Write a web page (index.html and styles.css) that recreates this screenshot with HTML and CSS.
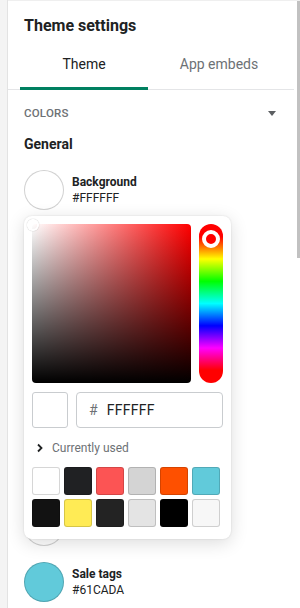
FILE: index.html
```html
<!DOCTYPE html>
<html>
<head>
<meta charset="utf-8">
<link rel="stylesheet" href="styles.css">
</head>
<body>
<div class="app">
  <div class="rail"></div>
  <div class="panel">
    <h1 class="title">Theme settings</h1>
    <div class="tabs">
      <div class="tab active">Theme</div>
      <div class="tab">App embeds</div>
    </div>
    <div class="section">
      <div class="section-head">
        <span class="section-label">Colors</span>
        <span class="caret"></span>
      </div>
      <h2 class="group">General</h2>
      <div class="items">
        <div class="item"><span class="dot" style="background:#FFFFFF"></span><div class="meta"><div class="name">Background</div><div class="val">#FFFFFF</div></div></div>
        <div class="item"><span class="dot" style="background:#202123"></span><div class="meta"><div class="name">Text</div><div class="val">#202123</div></div></div>
        <div class="item"><span class="dot" style="background:#FC5454"></span><div class="meta"><div class="name">Accent</div><div class="val">#FC5454</div></div></div>
        <div class="item"><span class="dot" style="background:#D4D4D4"></span><div class="meta"><div class="name">Border</div><div class="val">#D4D4D4</div></div></div>
        <div class="item"><span class="dot" style="background:#FE5000"></span><div class="meta"><div class="name">Buttons</div><div class="val">#FE5000</div></div></div>
        <div class="item"><span class="dot" style="background:#121212"></span><div class="meta"><div class="name">Links</div><div class="val">#121212</div></div></div>
        <div class="item"><span class="dot" style="background:#FFFFFF"></span><div class="meta"><div class="name">Footer</div><div class="val">#FFFFFF</div></div></div>
        <div class="item"><span class="dot" style="background:#61CADA"></span><div class="meta"><div class="name">Sale tags</div><div class="val">#61CADA</div></div></div>
      </div>
    </div>

    <div class="popover">
      <div class="picker">
        <div class="sv">
          <span class="sv-knob"></span>
        </div>
        <div class="hue">
          <span class="hue-knob"></span>
        </div>
      </div>
      <div class="hex-row">
        <div class="preview"></div>
        <div class="hex-input"><span class="hash">#</span><span class="hex">FFFFFF</span></div>
      </div>
      <div class="used">
        <svg class="chev" width="8" height="10" viewBox="0 0 8 10"><path d="M2 1.5 L5.5 5 L2 8.5" fill="none" stroke="#202223" stroke-width="1.8"/></svg>
        <span>Currently used</span>
      </div>
      <div class="swatches">
        <span class="sw" style="background:#FFFFFF"></span>
        <span class="sw" style="background:#202123"></span>
        <span class="sw" style="background:#FC5454"></span>
        <span class="sw" style="background:#D4D4D4"></span>
        <span class="sw" style="background:#FE5000"></span>
        <span class="sw" style="background:#61CADA"></span>
        <span class="sw" style="background:#121212"></span>
        <span class="sw" style="background:#FFEB55"></span>
        <span class="sw" style="background:#232323"></span>
        <span class="sw" style="background:#E4E4E4"></span>
        <span class="sw" style="background:#000000"></span>
        <span class="sw" style="background:#F7F7F7"></span>
      </div>
    </div>

    <div class="scrollbar"></div>
  </div>
</div>
</body>
</html>
```

FILE: styles.css
```css
* { box-sizing: border-box; }
html, body {
  margin: 0;
  padding: 0;
  width: 300px;
  height: 608px;
  overflow: hidden;
  background: #fff;
  font-family: Roboto, "Liberation Sans", sans-serif;
  color: #202223;
}
.app {
  display: flex;
  height: 608px;
}
.rail {
  width: 8px;
  flex: none;
  background: #f4f4f4;
  border-right: 1px solid #e3e3e3;
}
.panel {
  flex: 1;
  position: relative;
  border-top: 1px solid #efefef;
}
.title {
  margin: 15px 0 0 16px;
  font-size: 16px;
  line-height: 20px;
  font-weight: 700;
}
.tabs {
  display: flex;
  margin: 4px 6px 0 0;
  padding: 0 4px 0 12px;
  border-bottom: 1px solid #e4e5e7;
}
.tab {
  height: 50px;
  margin-bottom: -1px;
  display: flex;
  align-items: center;
  justify-content: center;
  font-size: 14px;
  color: #6d7175;
  border-bottom: 3px solid transparent;
  flex: 1;
}
.tab.active {
  flex: none;
  width: 128px;
  color: #202223;
  border-bottom-color: #008060;
}
.section {
  padding: 15px 20px 0 16px;
}
.section-head {
  display: flex;
  justify-content: space-between;
  align-items: center;
  height: 16px;
}
.section-label {
  font-size: 11.5px;
  font-weight: 500;
  text-transform: uppercase;
  color: #6d7175;
  letter-spacing: 0.2px;
}
.caret {
  width: 0;
  height: 0;
  margin-right: 4px;
  border-left: 4px solid transparent;
  border-right: 4px solid transparent;
  border-top: 5px solid #5c5f62;
}
.group {
  margin: 13px 0 0 0;
  font-size: 14px;
  line-height: 20px;
  font-weight: 700;
}
.items {
  margin-top: 16px;
  display: flex;
  flex-direction: column;
  gap: 16px;
}
.item {
  display: flex;
  align-items: center;
  gap: 8px;
}
.dot {
  width: 40px;
  height: 40px;
  border-radius: 50%;
  border: 1px solid rgba(0, 0, 0, 0.18);
  flex: none;
}
.meta {
  font-size: 12px;
  line-height: 16px;
}
.name { font-weight: 700; }
.val { color: #202223; }

.popover {
  position: absolute;
  left: 16px;
  top: 215px;
  width: 207px;
  padding: 8px 8px 12px 8px;
  background: #fff;
  border-radius: 8px;
  box-shadow: 0 0 2px rgba(0, 0, 0, 0.12), 0 4px 18px rgba(0, 0, 0, 0.14);
}
.picker {
  display: flex;
  gap: 8px;
}
.sv {
  position: relative;
  width: 159px;
  height: 159px;
  border-radius: 4px;
  background:
    linear-gradient(to top, #000, rgba(0, 0, 0, 0)),
    linear-gradient(to right, #fff, #ff0000);
}
.sv-knob {
  position: absolute;
  left: -5px;
  top: -5px;
  width: 12px;
  height: 12px;
  border-radius: 50%;
  border: 2px solid #fff;
  box-shadow: 0 0 1px rgba(0, 0, 0, 0.4);
}
.hue {
  position: relative;
  width: 24px;
  height: 159px;
  border-radius: 12px;
  background: linear-gradient(to bottom,
    #ff0000 0%, #ff0000 8%, #ffff00 22%, #00ff00 36%, #00ffff 50%,
    #0000ff 64%, #ff00ff 78%, #ff0000 92%, #ff0000 100%);
}
.hue-knob {
  position: absolute;
  left: 3px;
  top: 6px;
  width: 18px;
  height: 18px;
  border-radius: 50%;
  background: #ff0000;
  border: 4px solid #fff;
}
.hex-row {
  display: flex;
  gap: 8px;
  margin-top: 9px;
}
.preview {
  width: 36px;
  height: 36px;
  border-radius: 3px;
  border: 1px solid #c9cccf;
  background: #fff;
}
.hex-input {
  flex: 1;
  height: 36px;
  border: 1px solid #c9cccf;
  border-radius: 4px;
  display: flex;
  align-items: center;
  gap: 9px;
  padding-left: 12px;
  font-size: 14px;
}
.hash {
  color: #6d7175;
}
.hex {
  color: #202223;
  letter-spacing: 0.3px;
}
.used {
  display: flex;
  align-items: center;
  height: 20px;
  margin-top: 10px;
  padding-left: 4px;
  gap: 8px;
  font-size: 12px;
  color: #6d7175;
}
.swatches {
  display: grid;
  grid-template-columns: repeat(6, 28px);
  gap: 4px;
  margin-top: 9px;
}
.sw {
  width: 28px;
  height: 28px;
  border-radius: 3px;
  border: 1px solid rgba(0, 0, 0, 0.16);
}
.scrollbar {
  position: absolute;
  right: 0;
  top: 0;
  width: 3px;
  height: 257px;
  background: #c1c1c1;
}
```
